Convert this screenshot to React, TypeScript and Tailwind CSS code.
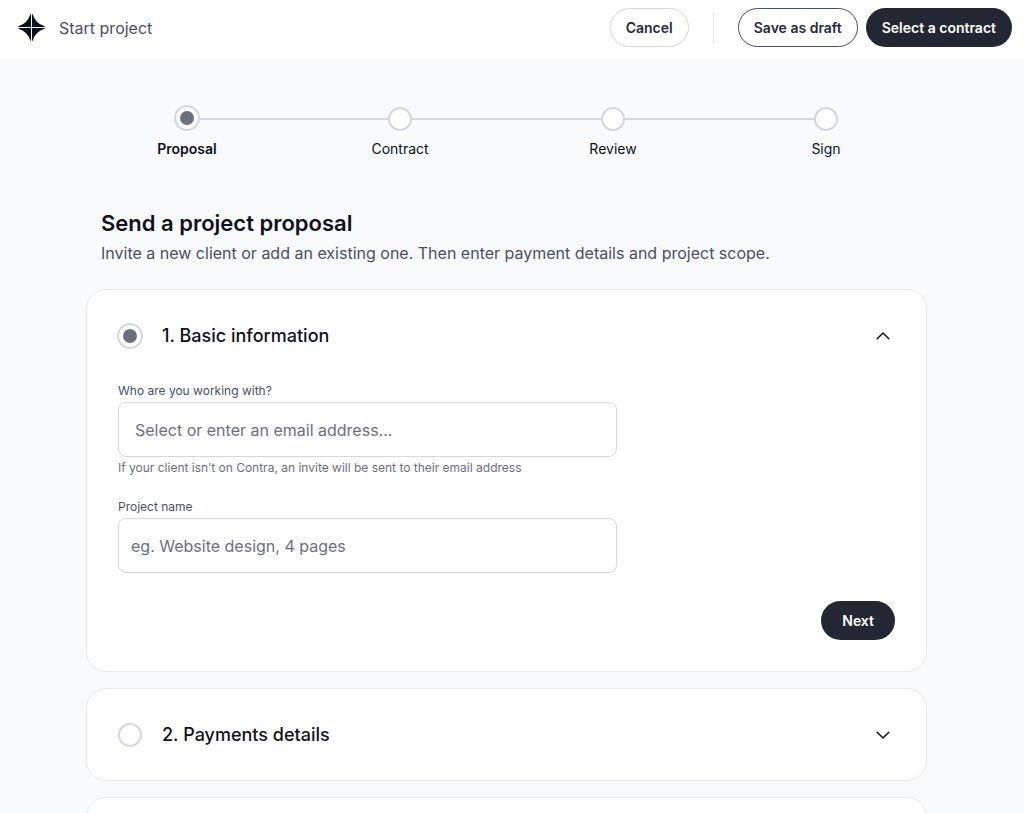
import { useState } from "react";
import type { ReactNode } from "react";
import clsx from "clsx";

const steps = ["Proposal", "Contract", "Review", "Sign"];

function Logo() {
  return (
    <svg viewBox="0 0 27 27" className="size-[27px]" fill="#0d111c" aria-hidden="true">
      <path d="M13 0.3V13H0.3V12.3Q9.6 9.6 12.3 0.3Z" />
      <path d="M14 0.3V13H26.7V12.3Q17.4 9.6 14.7 0.3Z" />
      <path d="M13 26.7V14H0.3V14.7Q9.6 17.4 12.3 26.7Z" />
      <path d="M14 26.7V14H26.7V14.7Q17.4 17.4 14.7 26.7Z" />
    </svg>
  );
}

function StatusDot({ active }: { active: boolean }) {
  return (
    <span
      className={clsx(
        "flex shrink-0 items-center justify-center rounded-full border-2 border-[#d5d6df] bg-white",
        active ? "size-[26px]" : "size-6"
      )}
    >
      {active && <span className="size-3.5 rounded-full bg-[#6b7080]" />}
    </span>
  );
}

function Stepper({ current }: { current: number }) {
  return (
    <ol className="mx-auto grid w-full max-w-[852px] grid-cols-4">
      {steps.map((step, i) => (
        <li key={step} className="flex flex-col items-center gap-2">
          <div className="flex h-[26px] w-full items-end">
            <span className={clsx("mb-[11px] h-0.5 flex-1", i > 0 && "bg-[#d5d6df]")} />
            <StatusDot active={i === current} />
            <span
              className={clsx("mb-[11px] h-0.5 flex-1", i < steps.length - 1 && "bg-[#d5d6df]")}
            />
          </div>
          <span className={clsx("text-sm text-[#0f121d]", i === current && "font-semibold")}>
            {step}
          </span>
        </li>
      ))}
    </ol>
  );
}

interface SectionProps {
  title: string;
  open: boolean;
  onToggle: () => void;
  children?: ReactNode;
}

function Section({ title, open, onToggle, children }: SectionProps) {
  return (
    <section className="shrink-0 rounded-[20px] border border-[#e6e8ec] bg-white px-[31px] pb-[31px]">
      <h2>
        <button
          type="button"
          onClick={onToggle}
          aria-expanded={open}
          className="flex w-full items-center gap-5 pt-[31px] pr-1 text-left text-lg leading-[29px] font-medium text-[#0f121d]"
        >
          <span className="flex w-6 justify-center">
            <StatusDot active={open} />
          </span>
          <span className="flex-1">{title}</span>
          <svg
            viewBox="0 0 16 16"
            className={clsx("size-4", open && "rotate-180")}
            fill="none"
            stroke="currentColor"
            strokeWidth="1.5"
            strokeLinecap="round"
            strokeLinejoin="round"
            aria-hidden="true"
          >
            <path d="M2.2 5.2 8 11l5.8-5.8" />
          </svg>
        </button>
      </h2>
      {open && children}
    </section>
  );
}

export default function App() {
  const [openSection, setOpenSection] = useState(1);
  const [email, setEmail] = useState("");
  const [projectName, setProjectName] = useState("");

  const toggle = (n: number) => setOpenSection(openSection === n ? 0 : n);

  return (
    <div className="flex h-screen flex-col overflow-hidden bg-[#f8fafc] font-['Inter',sans-serif]">
      <header className="flex shrink-0 items-center bg-white pt-2 pr-3 pb-3 pl-[18px]">
        <Logo />
        <span className="ml-3.5 text-base text-[#4b5063]">Start project</span>
        <div className="ml-auto flex items-center text-sm font-semibold">
          <button
            type="button"
            className="h-[39px] rounded-full border border-[#d5d6df] px-[15px] text-[#262b3a]"
          >
            Cancel
          </button>
          <span className="mx-6 h-8 w-px bg-gray-200" />
          <button
            type="button"
            className="mr-2 h-[39px] rounded-full border border-[#4b5063] px-[15px] text-[#262b3a]"
          >
            Save as draft
          </button>
          <button type="button" className="h-[39px] rounded-full bg-[#222733] px-4 text-white">
            Select a contract
          </button>
        </div>
      </header>

      <main className="flex min-h-0 flex-1 flex-col pt-[46px] pr-[11px]">
        <Stepper current={0} />

        <div className="mx-auto flex w-full max-w-[841px] flex-col gap-4 pt-12">
          <div className="mb-2 px-[15px]">
            <h1 className="text-[22px] leading-8 font-semibold text-[#0f121d]">
              Send a project proposal
            </h1>
            <p className="mt-0.5 text-base text-[#4b5063]">
              Invite a new client or add an existing one. Then enter payment details and project
              scope.
            </p>
          </div>

          <Section title="1. Basic information" open={openSection === 1} onToggle={() => toggle(1)}>
            <form className="mt-[30px] flex flex-col" onSubmit={(e) => e.preventDefault()}>
              <label htmlFor="client" className="text-xs leading-[22px] text-[#4b5063]">
                Who are you working with?
              </label>
              <input
                id="client"
                type="email"
                value={email}
                onChange={(e) => setEmail(e.target.value)}
                placeholder="Select or enter an email address..."
                className="h-[55px] w-full max-w-[499px] rounded-lg border border-[#d5d6df] px-4 text-base placeholder:text-[#6b7080]"
              />
              <p className="text-xs leading-[22px] text-[#6b7080]">
                If your client isn’t on Contra, an invite will be sent to their email address
              </p>
              <label htmlFor="project" className="mt-[17px] text-xs leading-[22px] text-[#4b5063]">
                Project name
              </label>
              <input
                id="project"
                type="text"
                value={projectName}
                onChange={(e) => setProjectName(e.target.value)}
                placeholder="eg. Website design, 4 pages"
                className="h-[55px] w-full max-w-[499px] rounded-lg border border-[#d5d6df] px-3 text-base placeholder:text-[#6b7080]"
              />
              <button
                type="submit"
                className="mt-7 h-[39px] self-end rounded-full bg-[#222733] px-[21px] text-sm font-semibold text-white"
              >
                Next
              </button>
            </form>
          </Section>

          <Section title="2. Payments details" open={openSection === 2} onToggle={() => toggle(2)} />

          <section className="h-[93px] shrink-0 rounded-[20px] border border-[#e6e8ec] bg-white" />
        </div>
      </main>
    </div>
  );
}
